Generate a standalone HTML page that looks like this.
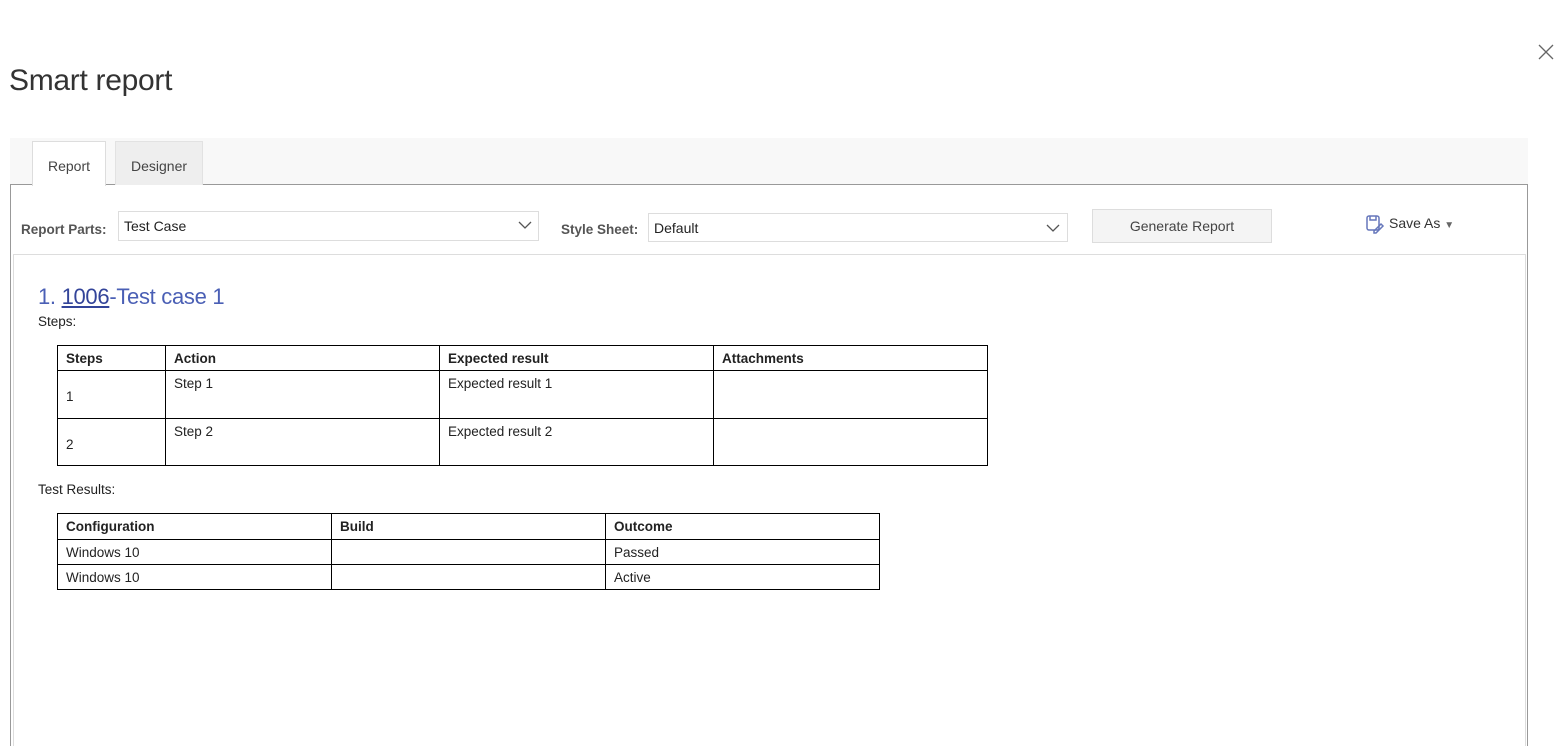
<!DOCTYPE html>
<html style="overflow:hidden;height:746px"><head><style>
body{margin:0;width:1568px;height:746px;background:#fff;font-family:"Liberation Sans",sans-serif;position:relative;overflow:hidden;color:#222}
.a{position:absolute}
table{position:absolute;border-collapse:collapse;font-size:13.5px}
td{border:1px solid #000;padding:0 8px;vertical-align:top}
th{border:1px solid #000;padding:0 8px;text-align:left;font-weight:bold}
.sel{position:absolute;border:1px solid #ddd;background:#fff;font-size:14px;box-sizing:border-box;padding:6px 5px}
.lbl{position:absolute;font-size:13.5px;font-weight:bold;color:#555}
</style></head><body>
<div class="a" style="left:9px;top:64px;font-size:30px;font-weight:300;color:#333;letter-spacing:-0.3px">Smart report</div>
<svg class="a" style="left:1538px;top:44px" width="16" height="16"><path d="M1 1L15 15M15 1L1 15" stroke="#666" stroke-width="1.3"/></svg>
<div class="a" style="left:10px;top:138px;width:1518px;height:47px;background:#f8f8f8"></div>
<div class="a" style="left:10px;top:184px;width:1518px;height:562px;border:1px solid #999;box-sizing:border-box;border-bottom:none"></div>
<div class="a" style="left:32px;top:141px;width:74px;height:45px;background:#fff;border:1px solid #ddd;border-bottom:none;box-sizing:border-box;text-align:center;line-height:48px;font-size:14px;color:#444">Report</div>
<div class="a" style="left:115px;top:141px;width:88px;height:44px;background:#eee;border:1px solid #e2e2e2;border-bottom:none;box-sizing:border-box;text-align:center;line-height:48px;font-size:14px;color:#444">Designer</div>
<div class="lbl" style="left:21px;top:222px">Report Parts:</div>
<div class="sel" style="left:118px;top:211px;width:421px;height:30px;padding-top:6px">Test Case</div>
<svg class="a" style="left:518px;top:221px" width="14" height="9"><path d="M1 1L7 7L13 1" stroke="#555" fill="none" stroke-width="1.3"/></svg>
<div class="lbl" style="left:561px;top:222px">Style Sheet:</div>
<div class="sel" style="left:648px;top:213px;width:420px;height:29px">Default</div>
<svg class="a" style="left:1046px;top:224px" width="14" height="9"><path d="M1 1L7 7L13 1" stroke="#555" fill="none" stroke-width="1.3"/></svg>
<div class="a" style="left:1092px;top:209px;width:180px;height:34px;background:#f4f4f4;border:1px solid #ddd;box-sizing:border-box;text-align:center;line-height:33px;font-size:14px;color:#444">Generate Report</div>
<svg class="a" style="left:1365px;top:214px" width="20" height="20"><rect x="2" y="2" width="12" height="14" rx="2" fill="none" stroke="#6677bb" stroke-width="1.5"/><path d="M5 2v4h6V2M9 17l7-7 2 2-7 7h-2z" fill="none" stroke="#6677bb" stroke-width="1.5"/></svg>
<div class="a" style="left:1389px;top:215px;font-size:14px;color:#333">Save As <span style="font-size:10px;color:#666">▼</span></div>
<div class="a" style="left:13px;top:254px;width:1513px;height:492px;border:1px solid #ddd;border-bottom:none;box-sizing:border-box"></div>
<div class="a" style="left:38px;top:284px;font-size:22px;font-weight:300;color:#4a5fb5;letter-spacing:-0.3px">1. <span style="text-decoration:underline;color:#334499">1006</span>-Test case 1</div>
<div class="a" style="left:38px;top:314px;font-size:13.5px">Steps:</div>
<table style="left:57px;top:345px;width:931px">
<tr style="height:25px"><th style="width:91px">Steps</th><th style="width:257px">Action</th><th style="width:257px">Expected result</th><th>Attachments</th></tr>
<tr style="height:48px"><td style="vertical-align:middle;padding-top:4px">1</td><td style="padding-top:5px">Step 1</td><td style="padding-top:5px">Expected result 1</td><td></td></tr>
<tr style="height:47px"><td style="vertical-align:middle;padding-top:4px">2</td><td style="padding-top:5px">Step 2</td><td style="padding-top:5px">Expected result 2</td><td></td></tr>
</table>
<div class="a" style="left:38px;top:482px;font-size:13.5px">Test Results:</div>
<table style="left:57px;top:513px;width:823px">
<tr style="height:26px"><th style="width:257px">Configuration</th><th style="width:257px">Build</th><th>Outcome</th></tr>
<tr style="height:25px"><td style="vertical-align:middle">Windows 10</td><td></td><td style="vertical-align:middle">Passed</td></tr>
<tr style="height:25px"><td style="vertical-align:middle">Windows 10</td><td></td><td style="vertical-align:middle">Active</td></tr>
</table>
</body></html>
